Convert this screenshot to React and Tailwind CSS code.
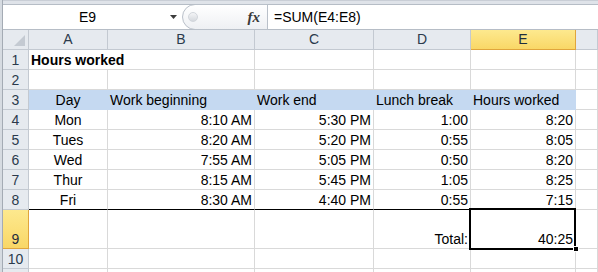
import React from 'react';

const FONT = { fontFamily: "'Liberation Sans', Arial, sans-serif" };

const rows = [
  ['Mon', '8:10 AM', '5:30 PM', '1:00', '8:20'],
  ['Tues', '8:20 AM', '5:20 PM', '0:55', '8:05'],
  ['Wed', '7:55 AM', '5:05 PM', '0:50', '8:20'],
  ['Thur', '8:15 AM', '5:45 PM', '1:05', '8:25'],
  ['Fri', '8:30 AM', '4:40 PM', '0:55', '7:15'],
];

function RowHead({ n, selected, tall }) {
  return (
    <div
      className={
        'flex items-end justify-center pb-px text-[14px] leading-4 border-r border-b ' +
        (selected
          ? 'bg-gradient-to-b from-[#fde98e] to-[#f9d766] border-[#e0a53c] text-[#1f2d3d]'
          : 'bg-[#e6eaef] border-[#c3c9d1] text-[#2b3a4c]') +
        (tall ? ' h-[39px]' : ' h-[20px]')
      }
    >
      {n}
    </div>
  );
}

function Cell({ children, align = 'right', className = '' }) {
  const j = align === 'right' ? 'justify-end pr-[2px]' : align === 'center' ? 'justify-center' : 'justify-start pl-[2px]';
  return (
    <div className={'flex items-end pb-px text-[14px] leading-4 text-black whitespace-nowrap border-r border-b ' + j + ' ' + className}>
      {children}
    </div>
  );
}

function FormulaBar() {
  return (
    <div className="h-[31px] bg-[#dfe3e9] pt-[3px] border-t border-[#c9ced6]">
      <div className="flex h-[26px] bg-white border-y border-[#b6bdc6]">
        <div className="relative w-[179px] flex items-center justify-center text-[14px] text-black">
          <span className="pr-[10px]">E9</span>
          <svg className="absolute right-[5px] top-[10px]" width="7" height="4" viewBox="0 0 7 4">
            <path d="M0 0 H7 L3.5 4 Z" fill="#3c3c3c" />
          </svg>
        </div>
        <div className="relative w-[86px] flex items-center justify-end pr-[7px] rounded-l-[13px] border border-[#b9c0c9] bg-gradient-to-b from-white to-[#eef0f3] -my-px">
          <div className="absolute left-[5px] top-[7px] w-[10px] h-[10px] rounded-full bg-gradient-to-b from-[#f4f5f7] to-[#d5d9de] border border-[#d2d6dc]" />
          <span className="text-[15px] italic font-bold text-[#3a3a3a]" style={{ fontFamily: "'Liberation Serif', serif" }}>
            fx
          </span>
        </div>
        <div className="flex-1 flex items-center pl-[6px] text-[14px] text-black">=SUM(E4:E8)</div>
      </div>
    </div>
  );
}

export default function App() {
  const hdr = 'flex items-center justify-center text-[14px] h-[20px] border-r border-b';
  const plain = 'bg-[#e6eaef] border-[#c3c9d1] text-[#2b3a4c]';
  const grid = 'border-[#d9d9d9]';
  const blue = 'bg-[#c5d9f1] border-[#c5d9f1]';
  return (
    <div className="flex w-[598px] h-[272px] overflow-hidden bg-white" style={FONT}>
      <div className="w-[3px] shrink-0 bg-[#d6dbe1] border-r border-[#a4abb4]" />
      <div className="flex-1 flex flex-col">
        <FormulaBar />
        <div className="grid grid-cols-[26px_79px_147px_119px_97px_105px_1fr]">
          {/* column headers */}
          <div className={'relative ' + hdr + ' ' + plain}>
            <svg className="absolute right-[3px] bottom-[3px]" width="11" height="11" viewBox="0 0 11 11">
              <path d="M11 0 V11 H0 Z" fill="#c4cad2" />
            </svg>
          </div>
          {['A', 'B', 'C', 'D'].map((c) => (
            <div key={c} className={hdr + ' ' + plain}>{c}</div>
          ))}
          <div className={hdr + ' bg-gradient-to-b from-[#fde98e] to-[#f9d766] border-[#e0a53c] text-[#1f2d3d]'}>E</div>
          <div className={hdr + ' ' + plain} />

          {/* row 1 */}
          <RowHead n="1" />
          <Cell align="left" className={'col-span-2 font-bold ' + grid}>Hours worked</Cell>
          <Cell className={grid} />
          <Cell className={grid} />
          <Cell className={grid} />
          <Cell className={grid} />

          {/* row 2 */}
          <RowHead n="2" />
          {[0, 1, 2, 3, 4, 5].map((i) => (
            <Cell key={i} className={grid} />
          ))}

          {/* row 3 */}
          <RowHead n="3" />
          <Cell align="center" className={blue}>Day</Cell>
          <Cell align="left" className={blue}>Work beginning</Cell>
          <Cell align="left" className={blue}>Work end</Cell>
          <Cell align="left" className={blue}>Lunch break</Cell>
          <Cell align="left" className={blue}>Hours worked</Cell>
          <Cell className={grid} />

          {/* rows 4-8 */}
          {rows.map((r, i) => (
            <React.Fragment key={r[0]}>
              <RowHead n={String(i + 4)} />
              <Cell align="center" className={i === 4 ? 'border-r-[#d9d9d9] border-b-black' : grid}>{r[0]}</Cell>
              {r.slice(1).map((v, k) => (
                <Cell key={k} className={i === 4 ? 'border-r-[#d9d9d9] border-b-black' : grid}>{v}</Cell>
              ))}
              <Cell className={grid} />
            </React.Fragment>
          ))}

          {/* row 9 */}
          <RowHead n="9" selected tall />
          <Cell className={grid} />
          <Cell className={grid} />
          <Cell className={grid} />
          <Cell className={grid}>Total:</Cell>
          <div className="relative flex items-end justify-end pb-px pr-[2px] text-[14px] leading-4 border-r border-b border-[#d9d9d9]">
            40:25
            <div className="absolute -left-[2px] -top-[2px] -right-[1px] -bottom-[2px] border-2 border-black pointer-events-none" />
            <div className="absolute -right-[4px] -bottom-[4px] w-[6px] h-[6px] bg-black border border-white" />
          </div>
          <Cell className={grid} />

          {/* row 10 */}
          <RowHead n="10" />
          {[0, 1, 2, 3, 4, 5].map((i) => (
            <Cell key={i} className={'h-[20px] ' + grid} />
          ))}
          {/* row 11, only its top edge shows */}
          <RowHead n="" />
          {[0, 1, 2, 3, 4, 5].map((i) => (
            <Cell key={i} className={'h-[20px] ' + grid} />
          ))}
        </div>
      </div>
    </div>
  );
}
